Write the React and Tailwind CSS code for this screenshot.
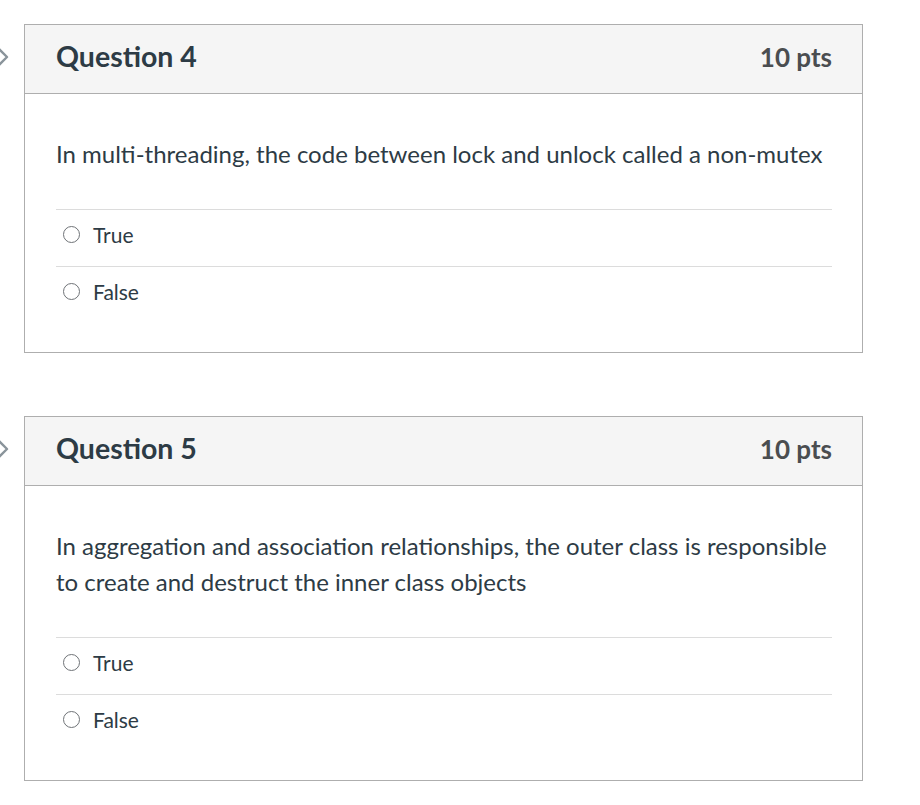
const questions = [
  {
    name: "Question 4",
    points: "10 pts",
    text: "In multi-threading, the code between lock and unlock called a non-mutex",
    answers: ["True", "False"],
  },
  {
    name: "Question 5",
    points: "10 pts",
    text: "In aggregation and association relationships, the outer class is responsible to create and destruct the inner class objects",
    answers: ["True", "False"],
  },
];

function Chevron() {
  return (
    <svg width="10" height="20" viewBox="0 0 10 20" className="-ml-px mt-[23px]">
      <path d="M0 2 L8 10 L0 18" fill="none" stroke="#8a949b" strokeWidth="2.4" strokeLinejoin="round" />
    </svg>
  );
}

function Question({ q }) {
  return (
    <div className="flex">
      <div className="w-[24px] shrink-0">
        <Chevron />
      </div>
      <div className="w-[839px] border border-[#aeaeae] bg-white">
        <div className="h-[69px] bg-[#f5f5f5] border-b border-[#aeaeae] flex items-center justify-between pl-[31px] pr-[30px] pb-[5px]">
          <h2 className="text-[28.5px] font-bold text-[#2d3b45] leading-none">{q.name}</h2>
          <div className="text-[26px] font-bold text-[#4a4d50] leading-none">{q.points}</div>
        </div>
        <div className="pl-[31px] pr-[30px] pt-[42px] pb-[29px]">
          <p className="text-[24px] leading-[36px] text-[#2d3b45] mb-[37px]">{q.text}</p>
          {q.answers.map((a) => (
            <div key={a} className="border-t border-[#dcdcdc] h-[57px] flex items-center pl-[7px] pb-[8px] gap-[13px]">
              <span className="w-[17px] h-[17px] rounded-full border-[1.5px] border-[#6f7377] bg-white shrink-0" />
              <span className="text-[21px] text-[#2d3b45] leading-none">{a}</span>
            </div>
          ))}
        </div>
      </div>
    </div>
  );
}

export default function App() {
  return (
    <div className="w-[920px] h-[805px] bg-white pt-[24px] flex flex-col gap-[63px]" style={{ fontFamily: "Lato, 'Noto Sans', sans-serif" }}>
      {questions.map((q) => (
        <Question key={q.name} q={q} />
      ))}
    </div>
  );
}
